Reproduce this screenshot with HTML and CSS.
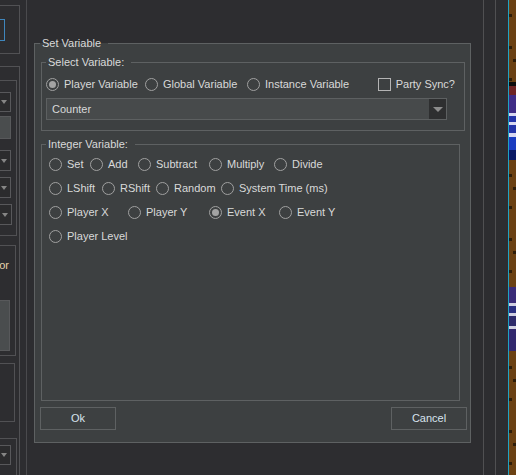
FILE: index.html
```html
<!DOCTYPE html>
<html>
<head>
	<title>Set Variable</title>
	<meta charset="utf-8">
	<link rel="stylesheet" href="styles.css">
</head>
<body>

<div class="screen">

	<!-- cut off edge of the event list behind the dialog -->
	<div class="side">
		<div class="pane">
			<div class="box box-top">
				<div class="blue-edit"></div>
			</div>
			<div class="box box-main">
				<div class="box sub-a">
					<div class="dd-tail first"></div>
					<div class="grey-tail"></div>
					<div class="dd-tail gap11"></div>
					<div class="dd-tail"></div>
					<div class="dd-tail wide"></div>
				</div>
				<div class="box sub-b">
					<span class="tail-text">or</span>
					<div class="grey-tail tall"></div>
				</div>
				<div class="box sub-c"></div>
				<div class="box sub-d">
					<div class="dd-tail low"></div>
				</div>
			</div>
		</div>
	</div>

	<div class="center">
		<fieldset class="dialog">
			<legend>Set Variable</legend>
			<div class="dlg-body">

				<fieldset class="group">
					<legend>Select Variable:</legend>
					<div class="sel-body">
						<div class="opt-row">
							<label class="opt w99"><input type="radio" name="scope" checked>Player Variable</label>
							<label class="opt w102"><input type="radio" name="scope">Global Variable</label>
							<label class="opt"><input type="radio" name="scope">Instance Variable</label>
							<label class="opt party"><input type="checkbox">Party Sync?</label>
						</div>
						<div class="combo">
							<span class="combo-text">Counter</span>
							<span class="combo-btn"></span>
						</div>
					</div>
				</fieldset>

				<fieldset class="group int-group">
					<legend>Integer Variable:</legend>
					<div class="int-body">
						<div class="opt-row">
							<label class="opt w41"><input type="radio" name="op">Set</label>
							<label class="opt w48"><input type="radio" name="op">Add</label>
							<label class="opt w71"><input type="radio" name="op">Subtract</label>
							<label class="opt w65"><input type="radio" name="op">Multiply</label>
							<label class="opt"><input type="radio" name="op">Divide</label>
						</div>
						<div class="opt-row">
							<label class="opt w53"><input type="radio" name="op">LShift</label>
							<label class="opt w54"><input type="radio" name="op">RShift</label>
							<label class="opt w65"><input type="radio" name="op">Random</label>
							<label class="opt"><input type="radio" name="op">System Time (ms)</label>
						</div>
						<div class="opt-row">
							<label class="opt w79"><input type="radio" name="op">Player X</label>
							<label class="opt w81"><input type="radio" name="op">Player Y</label>
							<label class="opt w70"><input type="radio" name="op" checked>Event X</label>
							<label class="opt"><input type="radio" name="op">Event Y</label>
						</div>
						<div class="opt-row">
							<label class="opt"><input type="radio" name="op">Player Level</label>
						</div>
					</div>
				</fieldset>

				<div class="actions">
					<button class="btn" type="button">Ok</button>
					<button class="btn" type="button">Cancel</button>
				</div>

			</div>
		</fieldset>
	</div>

	<!-- map view on the right -->
	<div class="edge">
		<div class="rail"></div>
		<div class="rail wide"></div>
		<div class="map">
			<div class="map-gap top"></div>
			<div class="tile-black"></div>
			<div class="tile-red"></div>
			<div class="tile-water"></div>
			<div class="map-gap mid"></div>
			<div class="tile-water dusk"></div>
		</div>
	</div>

</div>

</body>
</html>
```

FILE: styles.css
```css
* {
	box-sizing: border-box;
}
body {
	margin: 0;
	background: #2d2d30;
	color: #d9d9d9;
	font-family: "Liberation Sans", Arial, sans-serif;
	font-size: 11px;
	line-height: 13px;
}
.screen {
	display: flex;
	height: 475px;
	overflow: hidden;
}

/* left panel edge */
.side {
	width: 34px;
	flex-shrink: 0;
}
.pane {
	width: 27px;
	height: 100%;
	border-right: 1px solid #4a4a4d;
	overflow: hidden;
	display: flex;
	flex-direction: column;
	align-items: flex-end;
}
.box {
	flex-shrink: 0;
	width: 40px;
	border: 1px solid #515154;
	display: flex;
	flex-direction: column;
	align-items: flex-end;
}
.box-top {
	margin: 5px 6px 0 0;
	height: 49px;
}
.blue-edit {
	margin: 13px 14px 0 0;
	width: 30px;
	height: 22px;
	border: 1px solid #3f86bd;
}
.box-main {
	margin: 12px 6px 0 0;
	height: 440px;
}
.sub-a {
	margin: 13px 2px 0 0;
	height: 156px;
}
.sub-b {
	margin: 9px 3px 0 0;
	height: 111px;
}
.sub-c {
	margin: 7px 4px 0 0;
	height: 59px;
}
.sub-d {
	margin: 16px 2px 0 0;
	height: 60px;
}
.dd-tail {
	flex-shrink: 0;
	width: 30px;
	height: 21px;
	margin: 6px 5px 0 0;
	border: 1px solid #58585b;
	background: #2b2b2d;
	display: flex;
	align-items: center;
	justify-content: flex-end;
	padding-right: 3px;
}
.dd-tail::after {
	content: "";
	border-left: 3px solid transparent;
	border-right: 3px solid transparent;
	border-top: 4px solid #858585;
}
.dd-tail.first {
	margin-top: 11px;
	height: 20px;
}
.dd-tail.gap11 {
	margin-top: 11px;
}
.dd-tail.wide {
	margin-right: 4px;
}
.dd-tail.low {
	height: 20px;
}
.grey-tail {
	flex-shrink: 0;
	width: 30px;
	height: 23px;
	margin: 4px 5px 0 0;
	border: 1px solid #58595b;
	background: #4a4d4e;
}
.grey-tail.tall {
	margin-top: 28px;
	height: 51px;
}
.tail-text {
	margin: 13px 6px 0 0;
	color: #e6d2ad;
	white-space: nowrap;
}

/* dialog */
.center {
	width: 449px;
	flex-shrink: 0;
}
.dialog {
	margin: 37px 0 0;
	padding: 0;
	width: 437px;
	min-inline-size: 0;
	border: 1px solid #5e6162;
	background: #3d4041;
}
.dialog > legend {
	margin-left: 5px;
	padding: 0 7px 0 2px;
}
.dlg-body {
	padding: 6px 5px 12px 6px;
}
.group {
	margin: 0;
	padding: 0;
	min-inline-size: 0;
	border: 1px solid #5e6162;
}
.group > legend {
	margin-left: 4px;
	padding: 0 7px 0 2px;
}
.sel-body {
	padding: 4px 9px 10px 4px;
}
.int-group {
	margin: 7px 5px 0 0;
}
.int-body {
	height: 249px;
	padding: 1px 0 0 7px;
}
.int-body .opt-row {
	height: 24px;
}

.opt-row {
	display: flex;
	align-items: center;
	height: 22px;
}
.opt {
	display: flex;
	align-items: center;
	gap: 5px;
	flex-shrink: 0;
	white-space: nowrap;
}
.opt input {
	appearance: none;
	-webkit-appearance: none;
	margin: 0;
	width: 13px;
	height: 13px;
	border: 1px solid #a0a0a0;
	background: transparent;
	display: grid;
	place-content: center;
}
.opt input[type=radio] {
	border-radius: 50%;
}
.opt input[type=radio]:checked::before {
	content: "";
	width: 7px;
	height: 7px;
	border-radius: 50%;
	background: #a3a3a3;
}
.opt input[type=checkbox] {
	border-color: #b4b4b4;
}
.party {
	margin-left: auto;
}

.w41 { width: 41px; }
.w48 { width: 48px; }
.w53 { width: 53px; }
.w54 { width: 54px; }
.w65 { width: 65px; }
.w70 { width: 70px; }
.w71 { width: 71px; }
.w79 { width: 79px; }
.w81 { width: 81px; }
.w99 { width: 99px; }
.w102 { width: 102px; }

.combo {
	margin: 3px 8px 0 0;
	height: 22px;
	border: 1px solid #5d6061;
	background: #474a4b;
	display: flex;
	align-items: center;
}
.combo-text {
	flex: 1;
	padding-left: 5px;
}
.combo-btn {
	width: 17px;
	height: 100%;
	background: #2e2f30;
	display: flex;
	align-items: center;
	justify-content: center;
}
.combo-btn::after {
	content: "";
	border-left: 5px solid transparent;
	border-right: 5px solid transparent;
	border-top: 5px solid #8c8c8c;
}

.actions {
	display: flex;
	justify-content: space-between;
	margin: 6px -2px 0 -1px;
}
.btn {
	width: 76px;
	height: 23px;
	padding: 0;
	border: 1px solid #5e6162;
	background: transparent;
	color: #d8e3ee;
	font: inherit;
}

/* map edge */
.edge {
	display: flex;
	flex-shrink: 0;
}
.rail {
	width: 12px;
	border-left: 1px solid #505052;
}
.rail.wide {
	width: 13px;
}
.map {
	width: 8px;
	border-left: 1px solid #1ea2c4;
	background-color: #6b4113;
	background-image:
		repeating-linear-gradient(180deg, transparent 0 14px, #2e1d0a 14px 17px, transparent 17px 32px),
		repeating-linear-gradient(180deg, transparent 0 59px, #2e1d0a 59px 62px, transparent 62px 64px);
	background-size: 3px 100%, 3px 100%;
	background-position: left top, right top;
	background-repeat: no-repeat;
	display: flex;
	flex-direction: column;
}
.map-gap.top {
	height: 82px;
}
.map-gap.mid {
	height: 127px;
}
.tile-black {
	height: 4px;
	background: #0d0d0d;
}
.tile-red {
	height: 9px;
	background: #6e2424;
}
.tile-water {
	height: 65px;
	background: linear-gradient(180deg,
		#3f2c86 0 18px, #d8d8f0 18px 21px, #2434a8 21px 27px,
		#d8d8f0 27px 30px, #2434a8 30px 38px, #d8d8f0 38px 42px,
		#1a3cc0 42px 55px, #0b1a66 55px 65px);
}
.tile-water.dusk {
	height: 64px;
	background: linear-gradient(180deg,
		#3a2b78 0 16px, #cfcfe0 16px 19px, #2a2f80 19px 26px,
		#cfcfe0 26px 29px, #2d2a6a 29px 39px, #cfcfe0 39px 42px,
		#32286e 42px 64px);
}
```
